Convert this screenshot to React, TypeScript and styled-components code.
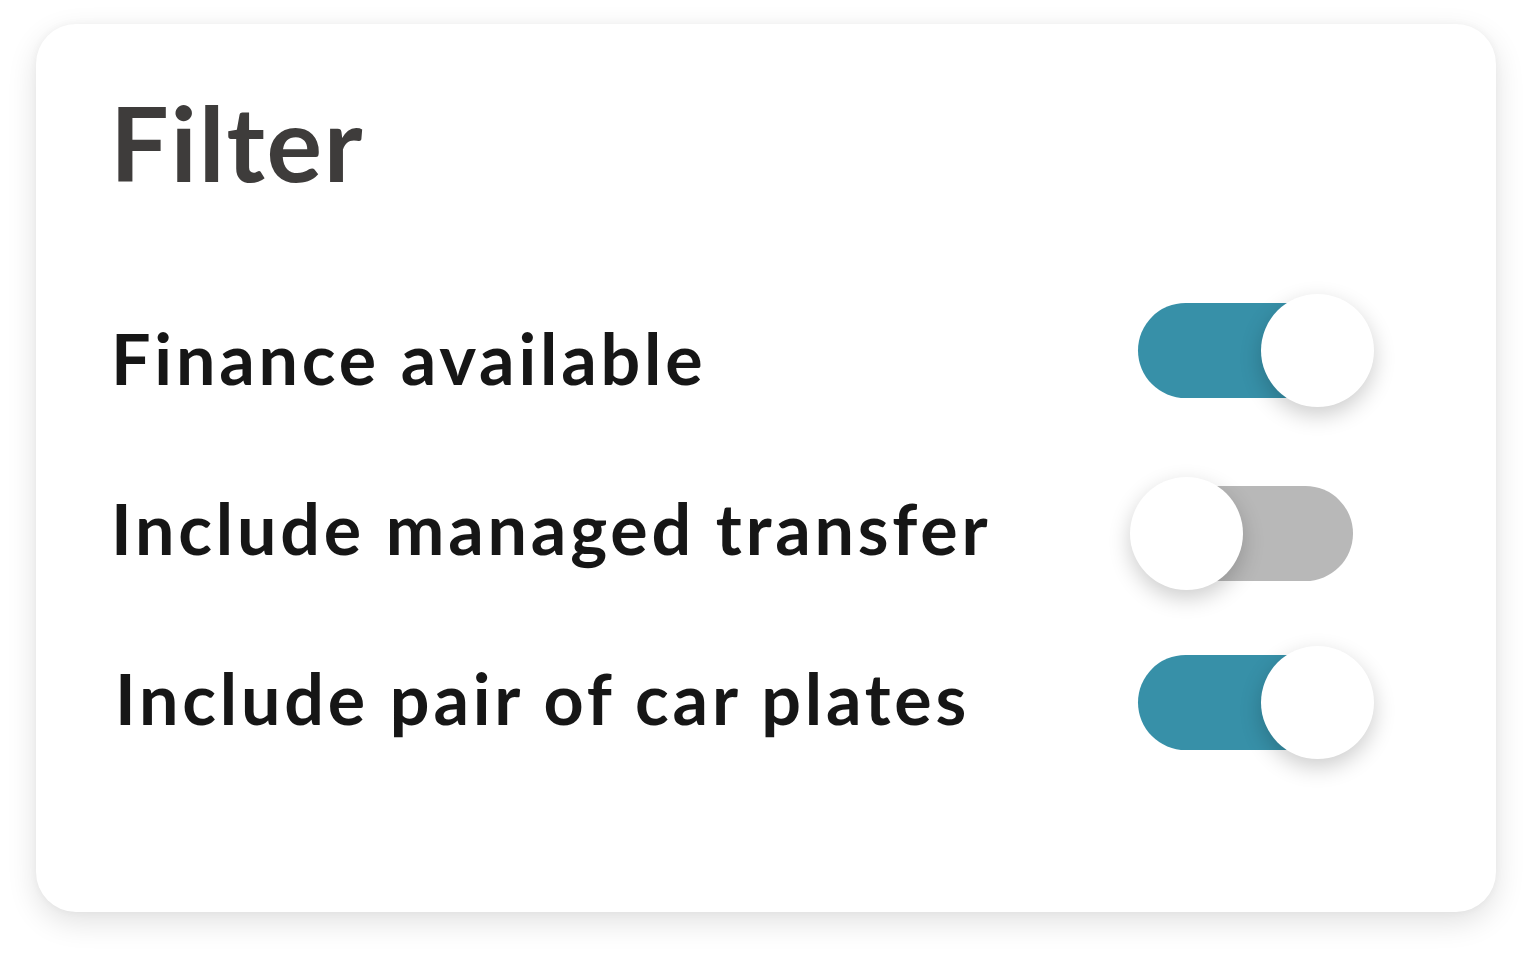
import React, { useState } from "react";
import styled, { createGlobalStyle } from "styled-components";

const colors = {
  title: "#3e3c3b",
  text: "#161616",
  on: "#3790a8",
  off: "#b8b8b8",
  white: "#ffffff",
};

const GlobalStyle = createGlobalStyle`
  html, body {
    margin: 0;
    padding: 0;
    background: #ffffff;
    font-family: Lato, "Noto Sans", sans-serif;
  }
`;

type FilterItem = {
  label: string;
  on: boolean;
  nudge: number;
  indent?: number;
};

const initialItems: FilterItem[] = [
  { label: "Finance available", on: true, nudge: -8 },
  { label: "Include managed transfer", on: false, nudge: 5 },
  { label: "Include pair of car plates", on: true, nudge: 4, indent: 4 },
];

const App = () => {
  const [items, setItems] = useState(initialItems);

  const toggle = (index: number) =>
    setItems((prev) =>
      prev.map((item, i) => (i === index ? { ...item, on: !item.on } : item))
    );

  return (
    <>
      <GlobalStyle />
      <Page>
        <Card>
          <Title>Filter</Title>
          <List>
            {items.map((item, i) => (
              <Row key={item.label}>
                <Label indent={item.indent ?? 0}>{item.label}</Label>
                <Switch
                  type="button"
                  role="switch"
                  aria-checked={item.on}
                  on={item.on}
                  nudge={item.nudge}
                  onClick={() => toggle(i)}
                >
                  <Knob on={item.on} />
                </Switch>
              </Row>
            ))}
          </List>
        </Card>
      </Page>
    </>
  );
};

export default App;

const Page = styled.div`
  padding: 24px 36px 50px;
`;

const Card = styled.div`
  box-sizing: border-box;
  width: 1460px;
  height: 888px;
  padding: 66px 143px 0 78px;
  background: ${colors.white};
  border-radius: 40px;
  box-shadow: 0 10px 30px rgba(0, 0, 0, 0.12), 0 0 8px rgba(0, 0, 0, 0.04);
`;

const Title = styled.h1`
  margin: 0 0 0 -4px;
  font-size: 104px;
  line-height: 1;
  font-weight: 700;
  color: ${colors.title};
  letter-spacing: 1.8px;
`;

const List = styled.div`
  margin-top: 79px;
  display: flex;
  flex-direction: column;
`;

const Row = styled.div`
  display: grid;
  grid-template-columns: 1fr 215px;
  align-items: center;
  height: 170px;
`;

const Label = styled.span<{ indent: number }>`
  margin-left: ${(p) => p.indent - 3}px;
  font-size: 70px;
  line-height: 1;
  font-weight: 700;
  color: ${colors.text};
  letter-spacing: 3.8px;
  white-space: nowrap;
`;

const Switch = styled.button<{ on: boolean; nudge: number }>`
  position: relative;
  width: 215px;
  height: 95px;
  padding: 0;
  border: none;
  border-radius: 48px;
  background: ${(p) => (p.on ? colors.on : colors.off)};
  transform: translateY(${(p) => p.nudge}px);
  cursor: pointer;
`;

const Knob = styled.span<{ on: boolean }>`
  position: absolute;
  top: -9px;
  left: ${(p) => (p.on ? "123px" : "-8px")};
  width: 113px;
  height: 113px;
  border-radius: 50%;
  background: ${colors.white};
  box-shadow: 0 8px 22px rgba(0, 0, 0, 0.2);
`;
